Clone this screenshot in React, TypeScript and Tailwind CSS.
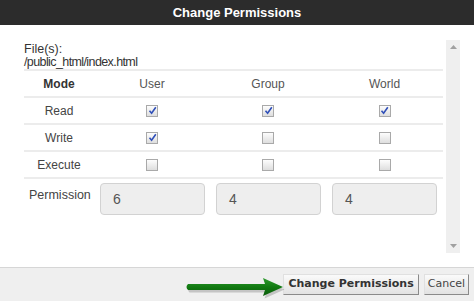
import React from "react";

function Check({ checked }: { checked: boolean }) {
  return (
    <div className="w-[12px] h-[12px] border border-[#a9a9a9] bg-gradient-to-b from-[#fdfdfd] to-[#dedede] flex items-center justify-center">
      {checked && (
        <svg width="9" height="9" viewBox="0 0 9 9">
          <path d="M1.5 4.8 L3.6 7.2 L7.8 1.2" stroke="#2f4fb8" strokeWidth="1.6" fill="none" />
        </svg>
      )}
    </div>
  );
}

const rows: { label: string; vals: boolean[] }[] = [
  { label: "Read", vals: [true, true, true] },
  { label: "Write", vals: [true, false, false] },
  { label: "Execute", vals: [false, false, false] },
];

export default function App() {
  return (
    <div
      className="w-[474px] h-[301px] flex flex-col bg-white overflow-hidden relative"
      style={{ fontFamily: '"Liberation Sans", Arial, sans-serif' }}
    >
      <div className="h-[25px] bg-[#2c2c2c] text-white font-bold text-[13px] flex items-center justify-center shrink-0">
        Change Permissions
      </div>
      <div className="flex-1 flex pl-[24px] pr-[14px]">
        <div className="w-[419px] flex flex-col pt-[18px] text-[12px] text-[#3a3a3a]">
          <div className="leading-[13px] text-[#333] text-[12.5px]">
            <div>File(s):</div>
            <div className="tracking-[-0.6px]">/public_html/index.html</div>
          </div>
          <div className="border-t-2 border-[#ececec]">
            <div className="grid grid-cols-[70px_116px_116px_117px] h-[27px] items-center border-b-2 border-[#ececec]">
              <div className="text-center font-bold text-[#333]">Mode</div>
              <div className="text-center text-[#555]">User</div>
              <div className="text-center text-[#555]">Group</div>
              <div className="text-center text-[#555]">World</div>
            </div>
            {rows.map((r) => (
              <div
                key={r.label}
                className="grid grid-cols-[70px_116px_116px_117px] h-[27px] items-center border-b-2 border-[#ececec]"
              >
                <div className="text-center text-[#444]">{r.label}</div>
                {r.vals.map((v, i) => (
                  <div key={i} className="flex justify-center">
                    <Check checked={v} />
                  </div>
                ))}
              </div>
            ))}
          </div>
          <div className="flex mt-[4px]">
            <div className="w-[76px] pl-[5px] pt-[3px] text-[#444] text-[12.5px]">Permission</div>
            <div className="flex gap-[11px]">
              {["6", "4", "4"].map((v, i) => (
                <div
                  key={i}
                  className="w-[105px] h-[32px] rounded-[4px] border border-[#d2d2d2] bg-[#eeeeee] flex items-center pl-[12px] text-[14px] text-[#555]"
                >
                  {v}
                </div>
              ))}
            </div>
          </div>
        </div>
        <div className="w-[14px] ml-[3px] mt-[15px] mb-[14px] bg-[#efefef] flex flex-col justify-between items-center py-[5px]">
          <svg width="7" height="4" viewBox="0 0 7 4">
            <path d="M0 4 L3.5 0 L7 4 Z" fill="#a0a0a0" />
          </svg>
          <svg width="7" height="4" viewBox="0 0 7 4">
            <path d="M0 0 L3.5 4 L7 0 Z" fill="#a0a0a0" />
          </svg>
        </div>
      </div>
      <div
        className="h-[34px] shrink-0 border-t border-[#d6d6d6] bg-[#efefef] flex items-center justify-end pr-[5px] gap-[5px] text-[11px] text-[#333]"
        style={{ fontFamily: '"DejaVu Sans", Verdana, sans-serif' }}
      >
        <button className="h-[21px] px-[4px] font-bold border border-t-[#e0e0e0] border-l-[#e0e0e0] border-r-[#8a8a8a] border-b-[#8a8a8a] bg-gradient-to-b from-[#fafafa] to-[#e2e2e2] text-[#333]">
          Change Permissions
        </button>
        <button className="h-[21px] px-[3px] border border-t-[#e0e0e0] border-l-[#e0e0e0] border-r-[#8a8a8a] border-b-[#8a8a8a] bg-gradient-to-b from-[#fafafa] to-[#e2e2e2] text-[#444]">
          Cancel
        </button>
      </div>
      <svg className="absolute left-[183px] top-[277px]" width="104" height="22" viewBox="0 0 104 22">
        <defs>
          <linearGradient id="ag" x1="0" y1="0" x2="0" y2="1">
            <stop offset="0" stopColor="#2f9a2f" />
            <stop offset="0.5" stopColor="#127a12" />
            <stop offset="1" stopColor="#0a5a0a" />
          </linearGradient>
        </defs>
        <path d="M5 8 L82 8 L80 2 L100 11 L80 20 L82 14 L5 14 Q2 11 5 8 Z" fill="#000" opacity="0.18" transform="translate(1.5,1.5)" />
        <path d="M5 7 L82 7 L80 1 L100 10 L80 19 L82 13 L5 13 Q2 10 5 7 Z" fill="url(#ag)" />
      </svg>
    </div>
  );
}
